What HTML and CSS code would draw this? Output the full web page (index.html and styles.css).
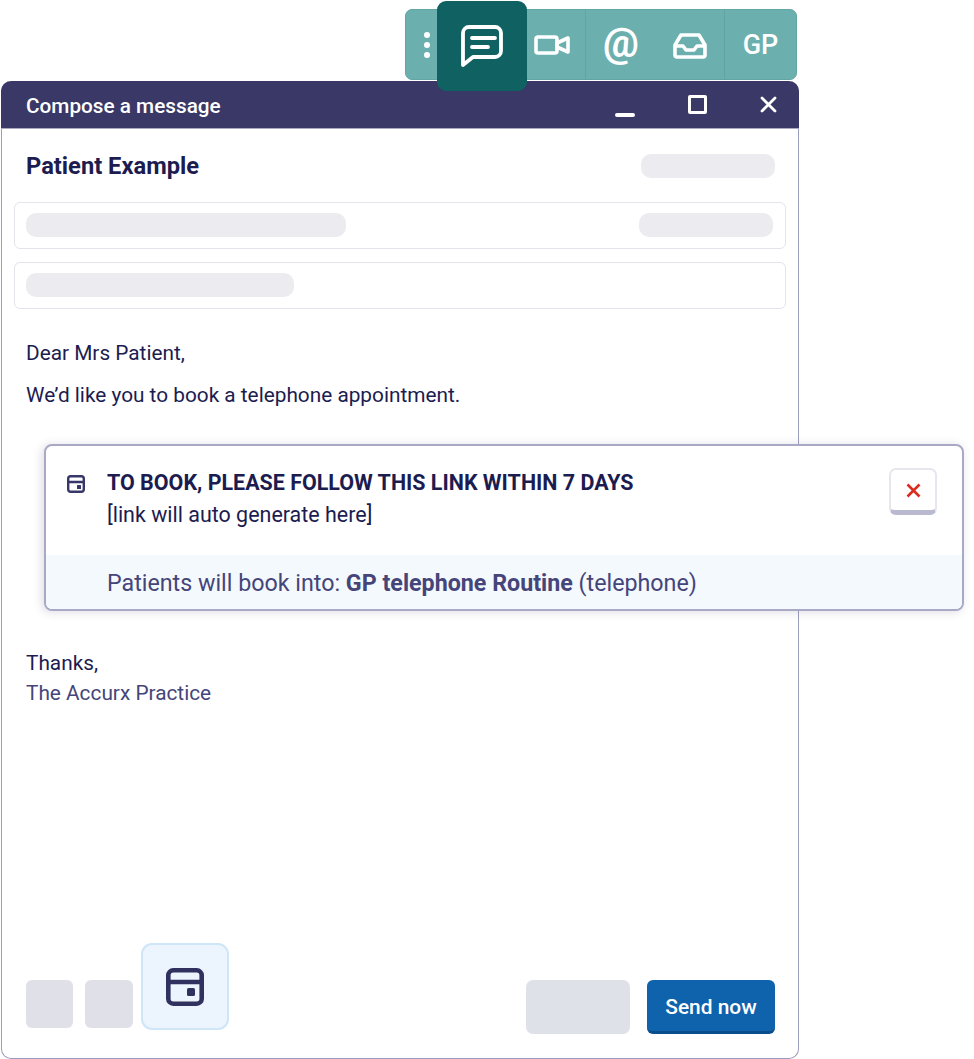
FILE: index.html
```html
<!DOCTYPE html>
<html lang="en">
<head>
  <meta charset="UTF-8" />
  <title>Compose a message</title>
  <link rel="stylesheet" href="styles.css">
</head>
<body>

  <!-- Toolbar -->
  <nav class="toolbar">
    <span class="dots"><i></i><i></i><i></i></span>
    <a class="tab-active">
      <svg width="42" height="42" viewBox="0 0 42 42" fill="none" stroke="#fff" stroke-width="3.8" stroke-linejoin="round" stroke-linecap="round">
        <path d="M2 40V8a6 6 0 0 1 6-6h26a6 6 0 0 1 6 6v18a6 6 0 0 1-6 6H12z"/>
        <path d="M11 13h23M11 22h16"/>
      </svg>
    </a>
    <a class="tab tab-video">
      <svg width="36" height="20" viewBox="0 0 36 20" fill="none" stroke="#fff" stroke-width="3.6" stroke-linejoin="round">
        <rect x="2" y="2" width="21" height="16" rx="2"/>
        <path d="M23 8l11-5v14l-11-5z"/>
      </svg>
    </a>
    <a class="tab tab-at">@</a>
    <a class="tab tab-inbox">
      <svg width="34" height="26" viewBox="0 0 34 26" fill="none" stroke="#fff" stroke-width="3.6" stroke-linejoin="round">
        <path d="M8 2h18l6 10v10a2 2 0 0 1-2 2H4a2 2 0 0 1-2-2V12z"/>
        <path d="M2 13h8l3 4h8l3-4h8"/>
      </svg>
    </a>
    <a class="tab tab-gp">GP</a>
  </nav>

  <div class="window">
    <header class="window-bar">
      <h1>Compose a message</h1>
      <div class="window-controls">
        <span class="ctl-min"></span>
        <span class="ctl-max"></span>
        <svg class="ctl-close" width="17" height="17" viewBox="0 0 17 17" stroke="#fff" stroke-width="2.8" stroke-linecap="round">
          <path d="M2 2l13 13M15 2L2 15"/>
        </svg>
      </div>
    </header>

    <main class="window-body">
      <div class="patient-row">
        <h2>Patient Example</h2>
        <span class="skeleton skel-name"></span>
      </div>

      <div class="field field-first">
        <span class="skeleton skel-long"></span>
        <span class="skeleton skel-name"></span>
      </div>
      <div class="field">
        <span class="skeleton skel-mid"></span>
      </div>

      <p class="greeting">Dear Mrs Patient,</p>
      <p class="intro">We’d like you to book a telephone appointment.</p>

      <!-- Booking link card, sticks out of the window -->
      <section class="booking">
        <div class="booking-top">
          <svg class="booking-icon" width="18" height="18" viewBox="0 0 18 18" fill="none" stroke="#37376a" stroke-width="2.400">
            <rect x="1.200" y="1.200" width="15.600" height="15.600" rx="2.500"/>
            <path d="M1 7h16"/>
            <rect x="10" y="10" width="4" height="4" rx=".5" fill="#37376a" stroke="none"/>
          </svg>
          <div class="booking-text">
            <strong>TO BOOK, PLEASE FOLLOW THIS LINK WITHIN 7 DAYS</strong>
            <span>[link will auto generate here]</span>
          </div>
          <button class="remove-btn">
            <svg width="15" height="15" viewBox="0 0 15 15" stroke="#d92d20" stroke-width="2.600">
              <path d="M1.500 1.500l12 12M13.500 1.500l-12 12"/>
            </svg>
          </button>
        </div>
        <div class="booking-foot">Patients will book into: <b>GP telephone Routine</b> (telephone)</div>
      </section>

      <p class="thanks">Thanks,</p>
      <p class="practice">The Accurx Practice</p>

      <footer class="actions">
        <span class="square"></span>
        <span class="square square-wide"></span>
        <span class="calendar-btn">
          <svg width="38" height="38" viewBox="0 0 38 38" fill="none" stroke="#31315f" stroke-width="4.600">
            <rect x="2.300" y="2.300" width="33.400" height="33.400" rx="5"/>
            <path d="M2 14h34"/>
            <rect x="21" y="20" width="8" height="8" rx="1.500" fill="#31315f" stroke="none"/>
          </svg>
        </span>
        <span class="grey-btn"></span>
        <button class="send-btn">Send now</button>
      </footer>
    </main>
  </div>

</body>
</html>
```

FILE: styles.css
```css
* {
  box-sizing: border-box;
}
body {
  font-family: Roboto, "Liberation Sans", sans-serif;
  background: #fff;
  margin: 0;
  padding-top: 9px;
  width: 974px;
  height: 1059px;
  overflow: hidden;
  color: #1c1c50;
}
p, h1, h2 {
  margin: 0;
}

/* toolbar */
.toolbar {
  margin-left: 405px;
  width: 392px;
  height: 71px;
  background: #6bb0ae;
  border: 1px solid #62a5a5;
  border-radius: 7px;
  display: flex;
  align-items: center;
  color: #fff;
}
.dots {
  width: 31px;
  padding-left: 18px;
  display: flex;
  flex-direction: column;
  gap: 4px;
}
.dots i {
  width: 6px;
  height: 6px;
  border-radius: 50%;
  background: #fff;
}
.tab-active {
  width: 90px;
  height: 90px;
  margin-top: 3px;
  background: #0f6261;
  border-radius: 9px;
  display: flex;
  align-items: center;
  justify-content: center;
  position: relative;
  z-index: 2;
}
.tab {
  height: 100%;
  display: flex;
  align-items: center;
  justify-content: center;
}
.tab-video {
  width: 59px;
  padding-right: 9px;
  border-right: 1px solid #62a3a3;
}
.tab-at {
  width: 70px;
  font-size: 40px;
  font-weight: 700;
  padding-bottom: 2px;
}
.tab-inbox {
  width: 69px;
  padding-top: 3px;
  border-right: 1px solid #62a3a3;
}
.tab-gp {
  flex: 1;
  font-size: 27px;
  font-weight: 500;
}

/* window */
.window {
  margin: 1px 0 0 1px;
  width: 798px;
  height: 978px;
  background: #fff;
  border: 1px solid #9d9dbd;
  border-top: 0;
  border-radius: 10px;
  display: flex;
  flex-direction: column;
}
.window-bar {
  height: 48px;
  margin: 0 -1px;
  padding: 0 22px 0 25px;
  background: #393866;
  border-bottom: 1px solid #a9a9c6;
  border-radius: 10px 10px 0 0;
  color: #fff;
  display: flex;
  align-items: center;
  justify-content: space-between;
}
.window-bar h1 {
  margin-top: 2px;
  font-size: 20.75px;
  font-weight: 500;
}
.window-controls {
  display: flex;
  align-items: center;
}
.ctl-min {
  width: 20px;
  height: 4px;
  margin-top: 21px;
  border-radius: 2px;
  background: #fff;
}
.ctl-max {
  width: 19px;
  height: 19px;
  margin-left: 53px;
  border: 3px solid #fff;
  border-radius: 2px;
}
.ctl-close {
  margin-left: 53px;
}

.window-body {
  flex: 1;
  padding: 0 12px 0 12px;
  display: flex;
  flex-direction: column;
}
.patient-row {
  height: 73px;
  padding: 0 11px 0 12px;
  display: flex;
  align-items: center;
  justify-content: space-between;
}
.patient-row h2 {
  font-size: 23.7px;
  font-weight: 700;
}
.skeleton {
  display: block;
  height: 24px;
  border-radius: 10px;
  background: #ebebf0;
}
.skel-name {
  width: 134px;
}
.skel-long {
  width: 320px;
}
.skel-mid {
  width: 268px;
}
.field {
  height: 47px;
  margin-top: 13px;
  padding: 0 12px 1px 11px;
  border: 1px solid #e4e4ea;
  border-radius: 6px;
  display: flex;
  align-items: center;
  justify-content: space-between;
}
.field-first {
  margin-top: 0;
}

.greeting {
  margin: 31px 0 0 12px;
  font-size: 20.8px;
  line-height: 26px;
}
.intro {
  margin: 16px 0 0 12px;
  font-size: 20.8px;
  line-height: 26px;
}

/* booking card */
.booking {
  margin: 36px -178px 0 30px;
  height: 167px;
  background: #fff;
  border: 2px solid #a9a9c6;
  border-radius: 8px;
  box-shadow: -2px 1px 10px rgba(60,60,110,0.18);
  overflow: hidden;
  flex-shrink: 0;
}
.booking-top {
  height: 109px;
  padding: 21px 25px 0 21px;
  display: flex;
  align-items: flex-start;
}
.booking-icon {
  margin-top: 8px;
}
.booking-text {
  flex: 1;
  margin-left: 22px;
  display: flex;
  flex-direction: column;
  font-size: 21.46px;
  line-height: 32px;
}
.booking-text strong {
  font-weight: 700;
}
.remove-btn {
  width: 48px;
  height: 47px;
  margin-top: 1px;
  padding: 0;
  background: #fff;
  border: 2px solid #e6e6ec;
  border-bottom: 5px solid #b9b9d0;
  border-radius: 7px;
  display: flex;
  align-items: center;
  justify-content: center;
}
.booking-foot {
  height: 56px;
  padding-left: 61px;
  background: #f4f9fd;
  color: #45457a;
  font-size: 23.26px;
  line-height: 57px;
}
.booking-foot b {
  font-weight: 700;
}

.thanks {
  margin: 39px 0 0 12px;
  font-size: 20.8px;
  line-height: 26px;
}
.practice {
  margin: 4px 0 0 12px;
  font-size: 20.8px;
  line-height: 26px;
  color: #45457a;
}

/* bottom actions */
.actions {
  margin-top: auto;
  padding: 0 11px 24px 12px;
  display: flex;
  align-items: flex-end;
}
.square {
  width: 47px;
  height: 48px;
  margin: 0 12px 6px 0;
  border-radius: 6px;
  background: #e0e0e9;
}
.square-wide {
  width: 48px;
  margin-right: 11px;
}
.calendar-btn {
  width: 88px;
  height: 87px;
  margin: 0 auto 4px -3px;
  background: #ecf4fd;
  border: 2px solid #cfe5f8;
  border-radius: 11px;
  display: flex;
  align-items: center;
  justify-content: center;
}
.grey-btn {
  width: 104px;
  height: 54px;
  margin-right: 17px;
  border-radius: 7px;
  background: #dfe1e9;
}
.send-btn {
  width: 128px;
  height: 54px;
  padding: 2px 0 0;
  background: #0f62ac;
  border: 0;
  border-bottom: 3px solid #0a4d8c;
  border-radius: 6px;
  color: #fff;
  font-family: inherit;
  font-size: 20.9px;
  font-weight: 500;
}
```
